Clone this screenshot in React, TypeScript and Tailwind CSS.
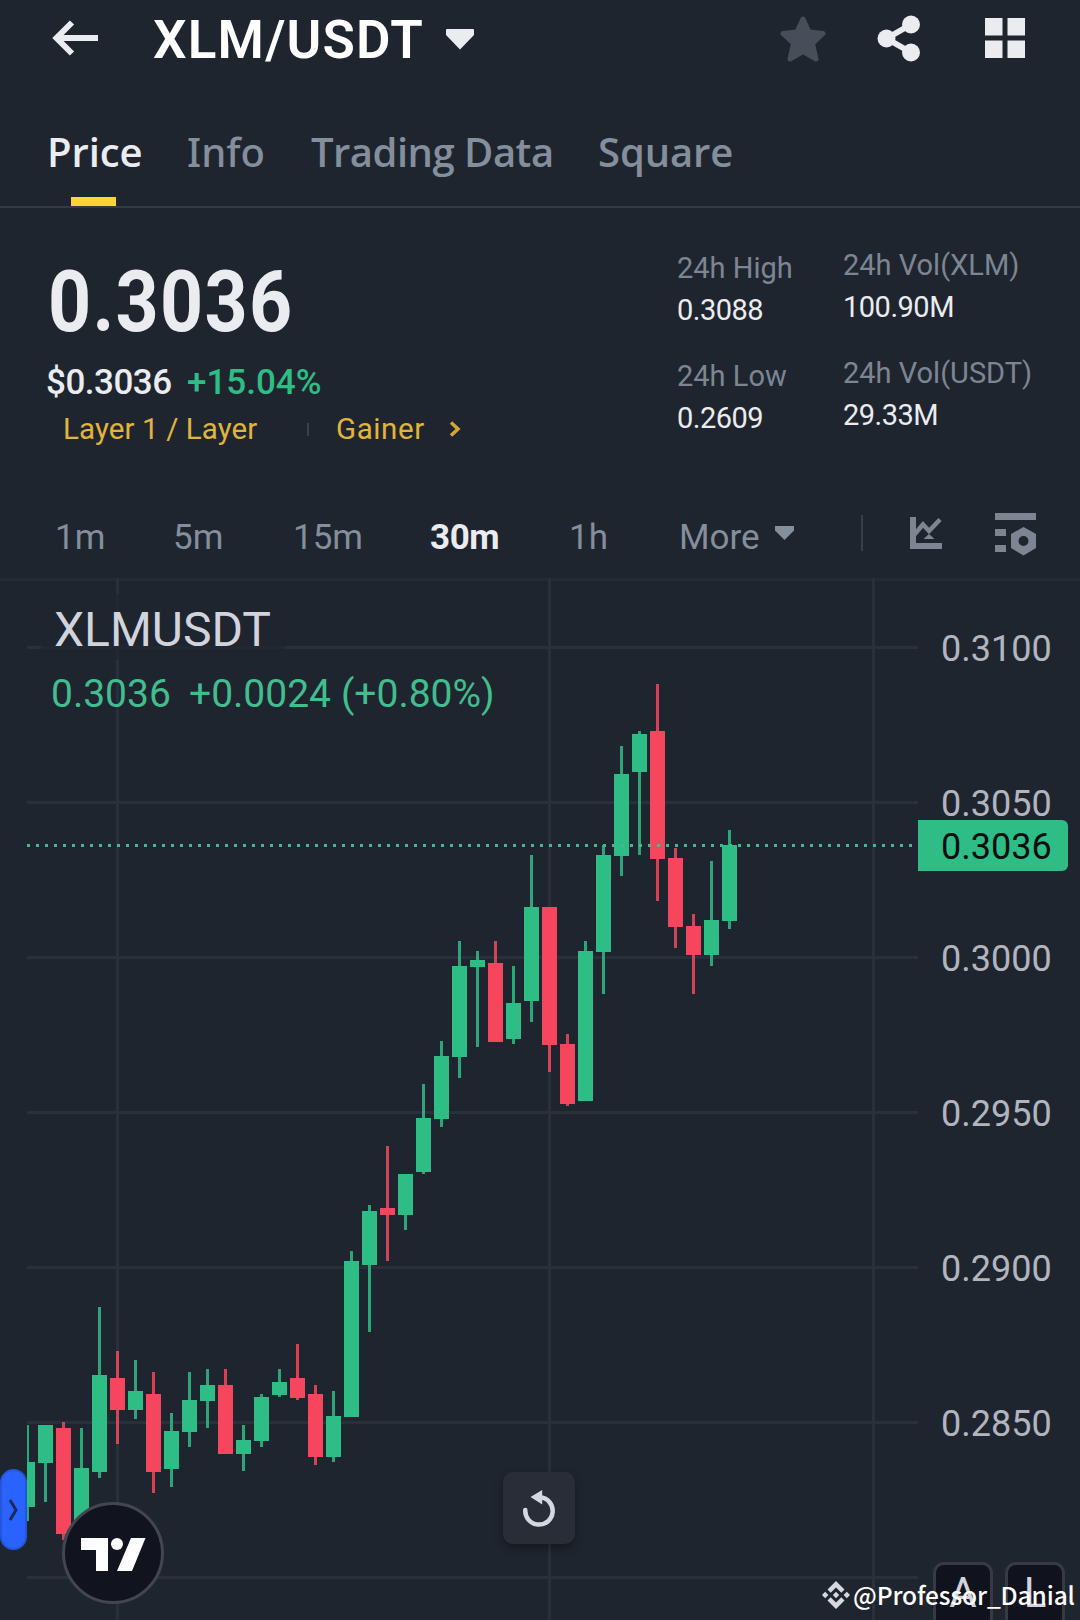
import { clsx } from "clsx";

type Candle = [high: number, top: number, bottom: number, low: number, up: 0 | 1];

const GREEN = "#2ebd85";
const RED = "#f6465d";
const CHART_TOP = 578;
const CHART_HEIGHT = 1042;

const TABS = [
  { label: "Price", className: "w-[94px] font-['Open_Sans'] font-semibold tracking-[-0.1px] text-[#eaecef]" },
  { label: "Info", className: "w-[78px] font-['Noto_Sans'] font-medium text-[#848e9c]" },
  { label: "Trading Data", className: "w-[241px] font-['Open_Sans'] font-semibold tracking-[-0.5px] text-[#848e9c]" },
  { label: "Square", className: "w-[136px] font-['Open_Sans'] font-semibold tracking-[-0.1px] text-[#848e9c]" },
];

const STATS = [
  [
    { label: "24h High", value: "0.3088" },
    { label: "24h Low", value: "0.2609" },
  ],
  [
    { label: "24h Vol(XLM)", value: "100.90M" },
    { label: "24h Vol(USDT)", value: "29.33M" },
  ],
];

const INTERVALS = [
  { label: "1m", className: "w-[118px]" },
  { label: "5m", className: "w-[120px]" },
  { label: "15m", className: "w-[137px]" },
  { label: "30m", className: "w-[139px] font-bold tracking-[-0.4px] text-[#eaecef]" },
  { label: "1h", className: "w-[110px]" },
];

const PRICE_LABELS = ["0.3100", "0.3050", "0.3000", "0.2950", "0.2900", "0.2850"];
const GRID_Y = [647.5, 802.5, 957.5, 1112.5, 1267.5, 1422.5, 1577.5];
const GRID_X = [117.5, 549.5, 873.5];

// one candle every 18px, the first one is cut by the left edge of the pane
const CANDLES: Candle[] = [
  [1425, 1462, 1507, 1521, 1],
  [1425, 1425, 1463, 1502, 1],
  [1422, 1428, 1534, 1540, 0],
  [1428, 1468, 1530, 1536, 1],
  [1307, 1375, 1472, 1478, 1],
  [1351, 1378, 1410, 1444, 0],
  [1360, 1391, 1410, 1419, 1],
  [1372, 1394, 1472, 1493, 0],
  [1413, 1431, 1469, 1487, 1],
  [1372, 1400, 1432, 1447, 1],
  [1369, 1385, 1401, 1428, 1],
  [1369, 1385, 1454, 1454, 0],
  [1425, 1440, 1454, 1471, 1],
  [1394, 1397, 1441, 1447, 1],
  [1369, 1382, 1395, 1397, 1],
  [1344, 1378, 1398, 1400, 0],
  [1385, 1394, 1457, 1465, 0],
  [1391, 1416, 1457, 1462, 1],
  [1251, 1261, 1417, 1417, 1],
  [1205, 1211, 1265, 1332, 1],
  [1146, 1208, 1215, 1261, 0],
  [1174, 1174, 1215, 1230, 1],
  [1084, 1118, 1172, 1174, 1],
  [1041, 1056, 1119, 1127, 1],
  [941, 966, 1057, 1078, 1],
  [951, 960, 967, 1047, 1],
  [941, 963, 1042, 1042, 0],
  [966, 1003, 1039, 1044, 1],
  [855, 907, 1001, 1022, 1],
  [907, 907, 1045, 1072, 0],
  [1034, 1044, 1104, 1106, 0],
  [941, 951, 1101, 1101, 1],
  [845, 855, 952, 994, 1],
  [746, 774, 856, 876, 1],
  [731, 734, 772, 855, 1],
  [684, 731, 859, 901, 0],
  [848, 858, 927, 948, 0],
  [914, 926, 955, 994, 0],
  [861, 920, 955, 966, 1],
  [830, 845, 921, 929, 1],
];

function Header() {
  return (
    <header className="flex h-[116px] items-start pl-[52px] pr-[55px]">
      <svg className="mt-5 h-9 w-[47px] shrink-0" viewBox="0 0 47 36" fill="none" stroke="#eaecef" strokeWidth="6">
        <path d="M46 18H5M20 2.5L4.5 18L20 33.5" />
      </svg>
      <h1 className="ml-[54px] w-[293px] whitespace-nowrap text-[53px] font-semibold leading-[81px] tracking-[1.2px] text-white">
        XLM/USDT
      </h1>
      <svg className="mt-7 h-[22px] w-7 shrink-0" viewBox="0 0 28 22" fill="#eaecef">
        <path d="M0 1.5Q0 1 1 1H27Q28 1 28 1.5V7L14 21.5L0 7Z" />
      </svg>
      <svg className="ml-auto mt-[15px] h-[47px] w-[46px]" viewBox="0 0 46 47" fill="#474d59" stroke="#474d59" strokeWidth="5" strokeLinejoin="round">
        <path d="M23 4L29 17L43 18.5L32.5 28.5L36 44L23 36.5L10 44L13.5 28.5L3 18.5L17 17Z" />
      </svg>
      <svg className="ml-[51px] mt-[15px] h-[47px] w-[44px]" viewBox="0 0 44 47" fill="#eaecef">
        <path d="M9.5 23.5L34 9.5M9.5 23.5L34 37.5" stroke="#eaecef" strokeWidth="6" />
        <circle cx="9.5" cy="23.5" r="9" />
        <circle cx="34" cy="9.5" r="9" />
        <circle cx="34" cy="37.5" r="9" />
      </svg>
      <svg className="ml-[64px] mt-[18px] size-10" viewBox="0 0 40 40" fill="#eaecef">
        <path d="M0 0H17.5V17.5H0ZM22.5 0H40V17.5H22.5ZM0 22.5H17.5V40H0ZM22.5 22.5H40V40H22.5Z" />
      </svg>
    </header>
  );
}

function Tabs() {
  return (
    <nav className="flex h-[92px] gap-[46px] border-b-2 border-[#333a45] pl-[47px] text-[40px] leading-[72px]">
      {TABS.map((tab, i) => (
        <div key={tab.label} className={clsx("flex flex-col whitespace-nowrap", tab.className)}>
          <span className="h-[81px]">{tab.label}</span>
          {i === 0 && <span className="ml-6 h-[9px] w-[45px] bg-[#fcd535]" />}
        </div>
      ))}
    </nav>
  );
}

function Summary() {
  return (
    <section className="flex h-[272px] pl-[46px]">
      <div className="w-[632px] shrink-0">
        <div className="ml-[2px] mt-[44px] h-[100px] origin-left scale-x-[0.875] text-[86px] font-bold leading-[100px] tracking-[1.5px] text-[#eaecef]">
          0.3036
        </div>
        <div className="mt-[9px] flex h-[44px] gap-[16px] text-[35px] font-medium leading-[44px]">
          <span className="w-[125px] tracking-[-0.5px] text-[#eaecef]">$0.3036</span>
          <span className="text-[#2ebd85]">+15.04%</span>
        </div>
        <div className="ml-[17px] mt-[4px] flex h-10 items-center text-[29.5px] leading-10 text-[#e0b53a]">
          <span className="w-[244px] tracking-[0.1px]">Layer 1 / Layer</span>
          <span className="h-[13px] w-[2px] bg-[#3a404c]" />
          <span className="ml-[27px] w-[113px] tracking-[0.6px]">Gainer</span>
          <svg className="h-4 w-3" viewBox="0 0 12 16" fill="none" stroke="#d3a730" strokeWidth="3.5">
            <path d="M2 1.5L9 8L2 14.5" />
          </svg>
        </div>
      </div>
      {STATS.map((column, i) => (
        <dl key={i} className={clsx("shrink-0 whitespace-nowrap", i === 0 ? "-ml-px mt-[39px] w-[166px]" : "mt-[36px]")}>
          {column.map((stat) => (
            <div key={stat.label} className="h-[108px]">
              <dt className="text-[29px] leading-[42px] text-[#7d8593]">{stat.label}</dt>
              <dd className="text-[29px] leading-[42px] tracking-[-0.5px] text-[#eaecef]">{stat.value}</dd>
            </div>
          ))}
        </dl>
      ))}
    </section>
  );
}

function IntervalBar() {
  return (
    <div className="flex h-[98px] items-start pl-[55px] text-[35px] leading-[115px] text-[#848e9c]">
      {INTERVALS.map((it) => (
        <span key={it.label} className={clsx("shrink-0 whitespace-nowrap", it.className)}>
          {it.label}
        </span>
      ))}
      <span className="w-[96px]">More</span>
      <svg className="mt-[46px] h-[14px] w-[19px]" viewBox="0 0 19 14" fill="#848e9c">
        <path d="M0 0H19V4.5L9.5 14L0 4.5Z" />
      </svg>
      <span className="ml-[67px] mt-[35px] h-9 w-[2px] bg-[#3a3e49]" />
      <svg className="ml-[47px] mt-[36px] h-[34px] w-[33px]" viewBox="0 0 33 34" fill="#7d8593">
        <path d="M0 1H6V27H32V33H0Z" />
        <path d="M4 19L13 8.5L19 15L30 3.5" fill="none" stroke="#7d8593" strokeWidth="4.5" />
        <path d="M19 18L24.5 23H13.5Z" />
      </svg>
      <svg className="ml-[52px] mt-[33px] h-[43px] w-[41px]" viewBox="0 0 41 43" fill="#7d8593">
        <path d="M0 0H41V7H0ZM0 16H11V23H0ZM0 32H11V39H0Z" />
        <path fillRule="evenodd" d="M28.5 14L41 21V35L28.5 42.5L16 35V21ZM28.5 23A5 5 0 1 0 28.5 33A5 5 0 1 0 28.5 23Z" />
      </svg>
    </div>
  );
}

function CandleChart() {
  return (
    <svg className="block h-[1042px] w-[1080px]" viewBox={`0 ${CHART_TOP} 1080 ${CHART_HEIGHT}`} shapeRendering="crispEdges">
      <defs>
        <clipPath id="pane">
          <rect x="27" y={CHART_TOP} width="891" height={CHART_HEIGHT} />
        </clipPath>
      </defs>
      <g fill="#2a303b">
        <rect x="0" y="578" width="1080" height="3" fill="#252b36" />
        {GRID_Y.map((y) => (
          <rect key={y} x="27" y={y - 1.5} width="891" height="3" />
        ))}
        {GRID_X.map((x) => (
          <rect key={x} x={x - 1.5} y="578" width="3" height="1042" />
        ))}
      </g>
      {/* legend backdrop dims the grid behind the symbol name */}
      <rect x="41" y="594" width="244" height="66" fill="#1f252f" opacity="0.7" />
      <g clipPath="url(#pane)">
        {CANDLES.map(([high, top, bottom, low, up], i) => {
          const x = 20 + i * 18;
          return (
            <g key={i} fill={up ? GREEN : RED}>
              <rect x={x + 6} y={high} width="3" height={low - high} opacity="0.85" />
              <rect x={x} y={top} width="15" height={bottom - top} />
            </g>
          );
        })}
      </g>
      <path d="M27 845.5H918" stroke="#45b98c" strokeWidth="3" strokeDasharray="3 6" />
    </svg>
  );
}

function Watermark() {
  return (
    <div className="absolute left-[822px] top-[994px] flex h-[46px] items-center gap-[3px] whitespace-nowrap">
      <svg className="size-7" viewBox="0 0 28 28" fill="#d5d8df">
        <path d="M14 0L22.5 8.5L19.3 11.7L14 6.4L8.7 11.7L5.5 8.5ZM14 28L22.5 19.5L19.3 16.3L14 21.6L8.7 16.3L5.5 19.5ZM3.2 10.8L6.4 14L3.2 17.2L0 14ZM24.8 10.8L28 14L24.8 17.2L21.6 14ZM14 10.8L17.2 14L14 17.2L10.8 14Z" />
      </svg>
      <span className="font-['Noto_Sans_CJK_SC',sans-serif] text-[24.5px] font-medium tracking-[-0.12px] text-white">
        @Professor_Danial
      </span>
    </div>
  );
}

function Chart() {
  return (
    <section className="relative h-[1042px] overflow-hidden">
      <CandleChart />

      <div className="absolute left-[54px] top-[21px] whitespace-nowrap">
        <div className="h-[62px] text-[48px] leading-[62px] text-[#d1d4dc]">XLMUSDT</div>
        <div className="-ml-[3px] flex h-[62px] text-[39px] leading-[66px] text-[#42bd8d]">
          <span className="w-[138px]">0.3036</span>
          <span className="w-[152px]">+0.0024</span>
          <span>(+0.80%)</span>
        </div>
      </div>

      <ul className="absolute left-[941px] top-[-7px] text-[36px] text-[#b2b5be]">
        {PRICE_LABELS.map((p) => (
          <li key={p} className="h-[155px] leading-[156px]">
            {p}
          </li>
        ))}
      </ul>
      <div className="absolute left-[918px] top-[242px] h-[51px] w-[150px] rounded-r-md bg-[#2ebd85] pl-[23px] text-[36px] leading-[54px] text-[#0b0e11]">
        0.3036
      </div>

      <button className="absolute left-0 top-[891px] flex h-[81px] w-[27px] items-center justify-center rounded-full border-[2px] border-[#2456dc] bg-[#2962ff]">
        <svg className="h-[22px] w-[9px]" viewBox="0 0 9 22" fill="none" stroke="#1c2a55" strokeWidth="3">
          <path d="M1 1L7 11L1 21" />
        </svg>
      </button>

      <div className="absolute left-[62px] top-[924px] size-[102px] rounded-full border-[3px] border-[#434651] bg-[#11141f]">
        <svg className="size-full" viewBox="65 1505 96 96" fill="#fff">
          <path d="M81 1538H108V1571H96V1550H81ZM131 1538H145.5L132 1571H117Z" />
          <circle cx="117" cy="1544" r="6" />
        </svg>
      </div>

      <button className="absolute left-[503px] top-[894px] size-[72px] rounded-[10px] bg-[#282d37] shadow-[0_4px_10px_rgba(0,0,0,0.35)]">
        <svg className="size-full" viewBox="503 1472 72 72" fill="none">
          <path d="M525.3 1510A13.7 13.7 0 1 0 540.5 1497.3" stroke="#d5d8e0" strokeWidth="4.5" strokeLinecap="round" />
          <path d="M530.5 1497L542.2 1490V1504.5Z" fill="#d5d8e0" />
        </svg>
      </button>

      <div className="absolute left-[933px] top-[984px] flex gap-3 text-[42px] text-[#d1d4dc]">
        {["A", "L"].map((c) => (
          <button key={c} className="h-[70px] w-[60px] rounded-[11px] border-[3px] border-[#373a45] bg-[#10131e] pb-[9px] text-center leading-[55px]">
            {c}
          </button>
        ))}
      </div>

      <Watermark />
    </section>
  );
}

export default function App() {
  return (
    <main className="h-[1620px] w-[1080px] overflow-hidden bg-[#1f252f] font-['Roboto',sans-serif]">
      <Header />
      <Tabs />
      <Summary />
      <IntervalBar />
      <Chart />
    </main>
  );
}
